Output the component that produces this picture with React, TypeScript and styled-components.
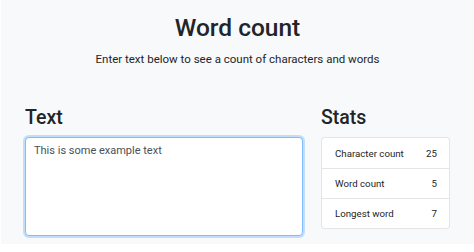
import React from "react";
import styled, { createGlobalStyle } from "styled-components";

const Global = createGlobalStyle`
  html, body { margin: 0; padding: 0; background: #ffffff; }
  body { font-family: Roboto, "Liberation Sans", Arial, sans-serif; color: #212529; }
`;

const Page = styled.div`
  background: #f8f9fa;
  margin-left: 1px;
  height: 244px;
  box-sizing: border-box;
  padding: 12px 24px 0 24px;
`;

const Header = styled.header`
  display: flex;
  flex-direction: column;
  align-items: center;
`;

const Title = styled.h1`
  margin: 0;
  font-size: 24.5px;
  line-height: 32px;
  font-weight: 500;
  color: #212529;
`;

const Lead = styled.p`
  margin: 7px 0 0;
  font-size: 11.5px;
  line-height: 16px;
  font-weight: 400;
  color: #212529;
`;

const Grid = styled.div`
  display: grid;
  grid-template-columns: 278px 1fr;
  column-gap: 18px;
  margin-top: 39px;
`;

const Column = styled.section`
  display: flex;
  flex-direction: column;
`;

const Heading = styled.h2`
  margin: 0 0 7px;
  font-size: 19.5px;
  line-height: 24px;
  font-weight: 500;
  color: #212529;
`;

const TextArea = styled.textarea`
  box-sizing: border-box;
  height: 99px;
  width: 100%;
  resize: none;
  font-family: Roboto, "Liberation Sans", Arial, sans-serif;
  font-size: 11px;
  line-height: 16px;
  color: #495057;
  background: #fff;
  padding: 5px 8px;
  border: 1px solid #80bdff;
  border-radius: 4px;
  box-shadow: 0 0 0 2px rgba(0, 123, 255, 0.22);
  outline: none;
`;

const List = styled.ul`
  list-style: none;
  margin: 0;
  padding: 0;
  background: #fff;
  border: 1px solid rgba(0, 0, 0, 0.1);
  border-radius: 4px;
`;

const Item = styled.li`
  display: flex;
  justify-content: space-between;
  align-items: center;
  height: 30px;
  box-sizing: border-box;
  padding: 0 12px 0 13px;
  font-size: 9.7px;
  color: #212529;
  & + & { border-top: 1px solid rgba(0, 0, 0, 0.1); }
`;

const stats = [
  { label: "Character count", value: 25 },
  { label: "Word count", value: 5 },
  { label: "Longest word", value: 7 },
];

export default function App() {
  return (
    <>
      <Global />
      <Page>
        <Header>
          <Title>Word count</Title>
          <Lead>Enter text below to see a count of characters and words</Lead>
        </Header>
        <Grid>
          <Column>
            <Heading>Text</Heading>
            <TextArea defaultValue="This is some example text" />
          </Column>
          <Column>
            <Heading>Stats</Heading>
            <List>
              {stats.map((s) => (
                <Item key={s.label}>
                  <span>{s.label}</span>
                  <span>{s.value}</span>
                </Item>
              ))}
            </List>
          </Column>
        </Grid>
      </Page>
    </>
  );
}
